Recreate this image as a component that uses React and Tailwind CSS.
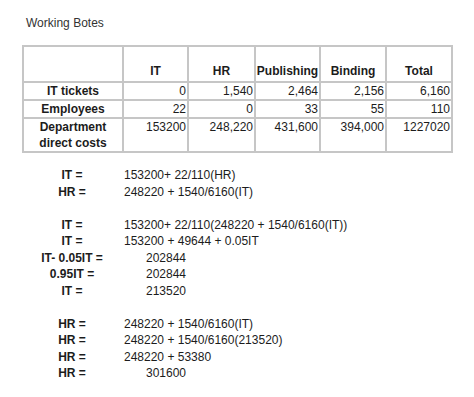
import React from "react";

const cols = ["IT", "HR", "Publishing", "Binding", "Total"];

const rows = [
  { label: ["IT tickets"], values: ["0", "1,540", "2,464", "2,156", "6,160"], h: "h-[16px]" },
  { label: ["Employees"], values: ["22", "0", "33", "55", "110"], h: "h-[17px]" },
  {
    label: ["Department", "direct costs"],
    values: ["153200", "248,220", "431,600", "394,000", "1227020"],
    h: "h-[32px]",
  },
];

// working lines: [left, right, indent]
const lines = [
  ["IT =", "153200+ 22/110(HR)", false],
  ["HR =", "248220 + 1540/6160(IT)", false],
  null,
  ["IT =", "153200+ 22/110(248220 + 1540/6160(IT))", false],
  ["IT =", "153200 + 49644 + 0.05IT", false],
  ["IT- 0.05IT =", "202844", true],
  ["0.95IT =", "202844", true],
  ["IT =", "213520", true],
  null,
  ["HR =", "248220 + 1540/6160(IT)", false],
  ["HR =", "248220 + 1540/6160(213520)", false],
  ["HR =", "248220 + 53380", false],
  ["HR =", "301600", true],
];

const App = () => {
  return (
    <div className="w-[474px] h-[397px] bg-white text-[12px] text-[#1c1c1c] font-['Liberation_Sans',Arial,sans-serif] overflow-hidden">
      <div className="pl-[26px] pt-[15px] leading-[16px] text-[#333]">Working Botes</div>

      {/* Table */}
      <table className="ml-[22px] mt-[14px] border-collapse table-fixed border-2 border-[#cfcfcf] leading-[16px]">
        <colgroup>
          <col className="w-[100px]" />
          <col className="w-[65px]" />
          <col className="w-[67px]" />
          <col className="w-[65px]" />
          <col className="w-[66px]" />
          <col className="w-[66px]" />
        </colgroup>
        <thead>
          <tr className="h-[36px]">
            <th className="border-2 border-[#c6c6c6] p-0"></th>
            {cols.map((c) => (
              <th
                key={c}
                className="border-2 border-[#c6c6c6] p-0 pb-[2px] align-bottom text-center font-bold"
              >
                {c}
              </th>
            ))}
          </tr>
        </thead>
        <tbody>
          {rows.map((row, i) => (
            <tr key={i} className={row.h}>
              <td className="border-2 border-[#c6c6c6] p-0 text-center font-bold align-top">
                {row.label.map((l) => (
                  <div key={l}>{l}</div>
                ))}
              </td>
              {row.values.map((v, j) => (
                <td
                  key={j}
                  className="border-2 border-[#c6c6c6] p-0 pr-[1px] text-right align-top"
                >
                  {v}
                </td>
              ))}
            </tr>
          ))}
        </tbody>
      </table>

      {/* Working */}
      <div className="mt-[14px] pl-[22px] leading-[16.5px]">
        {lines.map((line, i) =>
          line ? (
            <div key={i} className="flex">
              <div className="w-[100px] text-center font-bold">{line[0]}</div>
              <div className={`ml-[2px] ${line[2] ? "pl-[22px]" : ""}`}>{line[1]}</div>
            </div>
          ) : (
            <div key={i} className="h-[16.5px]"></div>
          )
        )}
      </div>
    </div>
  );
};

export default App;
